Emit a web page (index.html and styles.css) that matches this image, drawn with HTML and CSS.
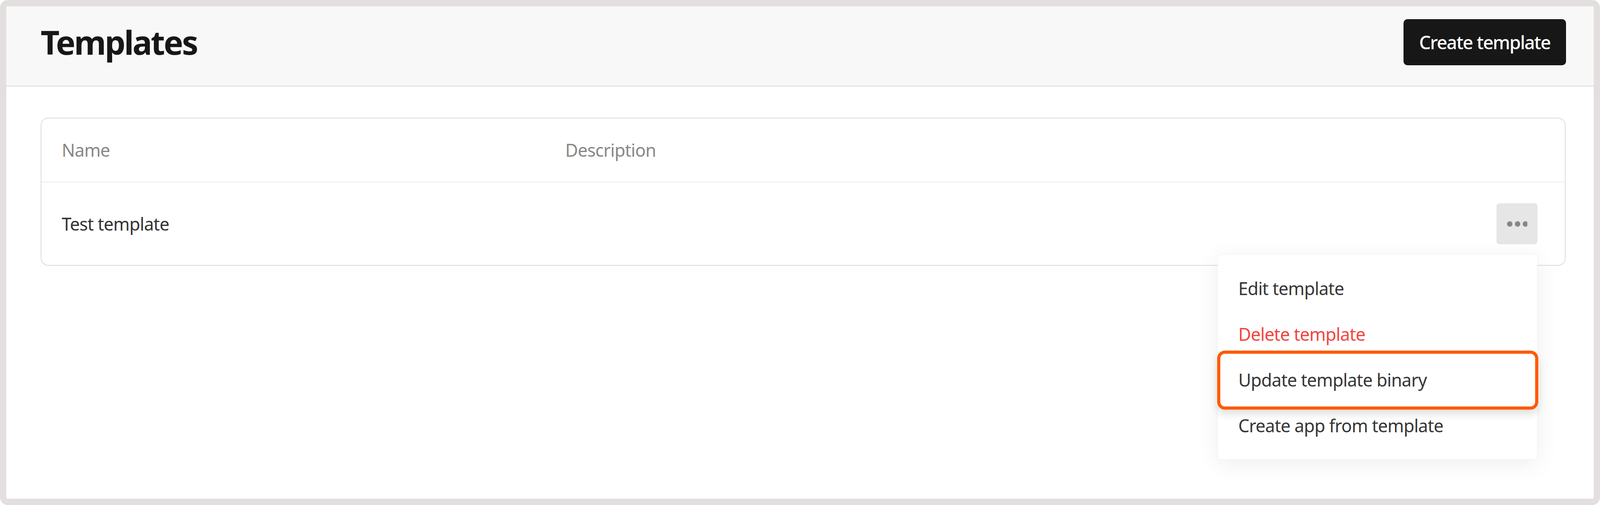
FILE: index.html
```html
<!DOCTYPE html>
<html lang="en">
<head>
<meta charset="utf-8">
<title>Templates</title>
<link rel="stylesheet" href="styles.css">
</head>
<body>
<div class="frame">
  <div class="panel">
    <header class="page-header">
      <h1 class="page-title">Templates</h1>
      <button class="btn-primary">Create template</button>
    </header>
    <main class="content">
      <div class="table-card">
        <div class="table-row table-head">
          <div class="col-name">Name</div>
          <div class="col-desc">Description</div>
          <div class="col-actions"></div>
        </div>
        <div class="table-row table-body">
          <div class="col-name">Test template</div>
          <div class="col-desc"></div>
          <div class="col-actions">
            <div class="actions">
              <button class="dots-btn" aria-label="More actions">
                <svg class="dots" width="52" height="14" viewBox="0 0 52 14"><circle cx="7" cy="7" r="7"/><circle cx="27" cy="7" r="7"/><circle cx="47" cy="7" r="7"/></svg>
              </button>
              <div class="menu">
                <div class="menu-item">Edit template</div>
                <div class="menu-item danger">Delete template</div>
                <div class="menu-item highlighted">Update template binary</div>
                <div class="menu-item">Create app from template</div>
              </div>
            </div>
          </div>
        </div>
      </div>
    </main>
  </div>
</div>
</body>
</html>
```
FILE: styles.css
```css
* { box-sizing: border-box; }
html, body {
  margin: 0;
  padding: 0;
  background: #ffffff;
}
body {
  font-family: "Noto Sans", "Open Sans", sans-serif;
  color: #333333;
}
.frame {
  height: 1292px;
  padding: 16px;
  background: #e3dfde;
  border-radius: 20px;
}
.panel {
  height: 100%;
  background: #ffffff;
  border-radius: 4px;
  overflow: hidden;
}
.page-header {
  display: flex;
  align-items: center;
  justify-content: space-between;
  height: 205px;
  padding: 33px 71px 52px 88px;
  background: #f8f8f8;
  border-bottom: 2px solid #d7d7dd;
}
.page-title {
  margin: 0;
  font-size: 84px;
  font-weight: 700;
  letter-spacing: -3.5px;
  color: #171717;
  line-height: 1.2;
}
.btn-primary {
  height: 118px;
  padding: 0 40px;
  border: none;
  border-radius: 10px;
  background: #171717;
  color: #ffffff;
  font-family: inherit;
  font-size: 47px;
  font-weight: 500;
  letter-spacing: -1.8px;
}
.content {
  padding: 80px 72px 0 88px;
}
.table-card {
  border: 2px solid #dcdce2;
  border-radius: 20px;
}
.table-row {
  display: grid;
  grid-template-columns: 1289px 1fr auto;
  align-items: center;
  padding: 0 70px 0 52px;
  font-size: 45px;
  letter-spacing: -0.9px;
}
.table-head {
  height: 164px;
  color: #888888;
  border-bottom: 3px solid #f2f2f2;
}
.table-body {
  height: 211px;
  color: #333333;
}
.actions {
  position: relative;
}
.dots-btn {
  display: flex;
  align-items: center;
  justify-content: center;
  width: 105px;
  height: 105px;
  padding: 0;
  border: none;
  border-radius: 8px;
  background: #e6e6e6;
}
.dots { fill: #868686; }
.menu {
  position: absolute;
  top: calc(100% + 25px);
  right: 0;
  width: 819px;
  padding: 28px 0;
  background: #ffffff;
  border: 1px solid #f0f0f0;
  border-radius: 8px;
  box-shadow: 0 12px 60px rgba(0, 0, 0, 0.07);
}
.menu-item {
  position: relative;
  display: flex;
  align-items: center;
  height: 117px;
  padding-left: 52px;
  font-size: 45px;
  letter-spacing: -0.9px;
  color: #363636;
}
.menu-item.danger { color: #f3443f; }
.menu-item.highlighted::after {
  content: "";
  position: absolute;
  top: -16px;
  bottom: -18px;
  left: -2px;
  right: -3px;
  border: 8px solid #ff5a00;
  border-radius: 20px;
  box-shadow: 0 12px 20px rgba(0, 0, 0, 0.12);
}
```
